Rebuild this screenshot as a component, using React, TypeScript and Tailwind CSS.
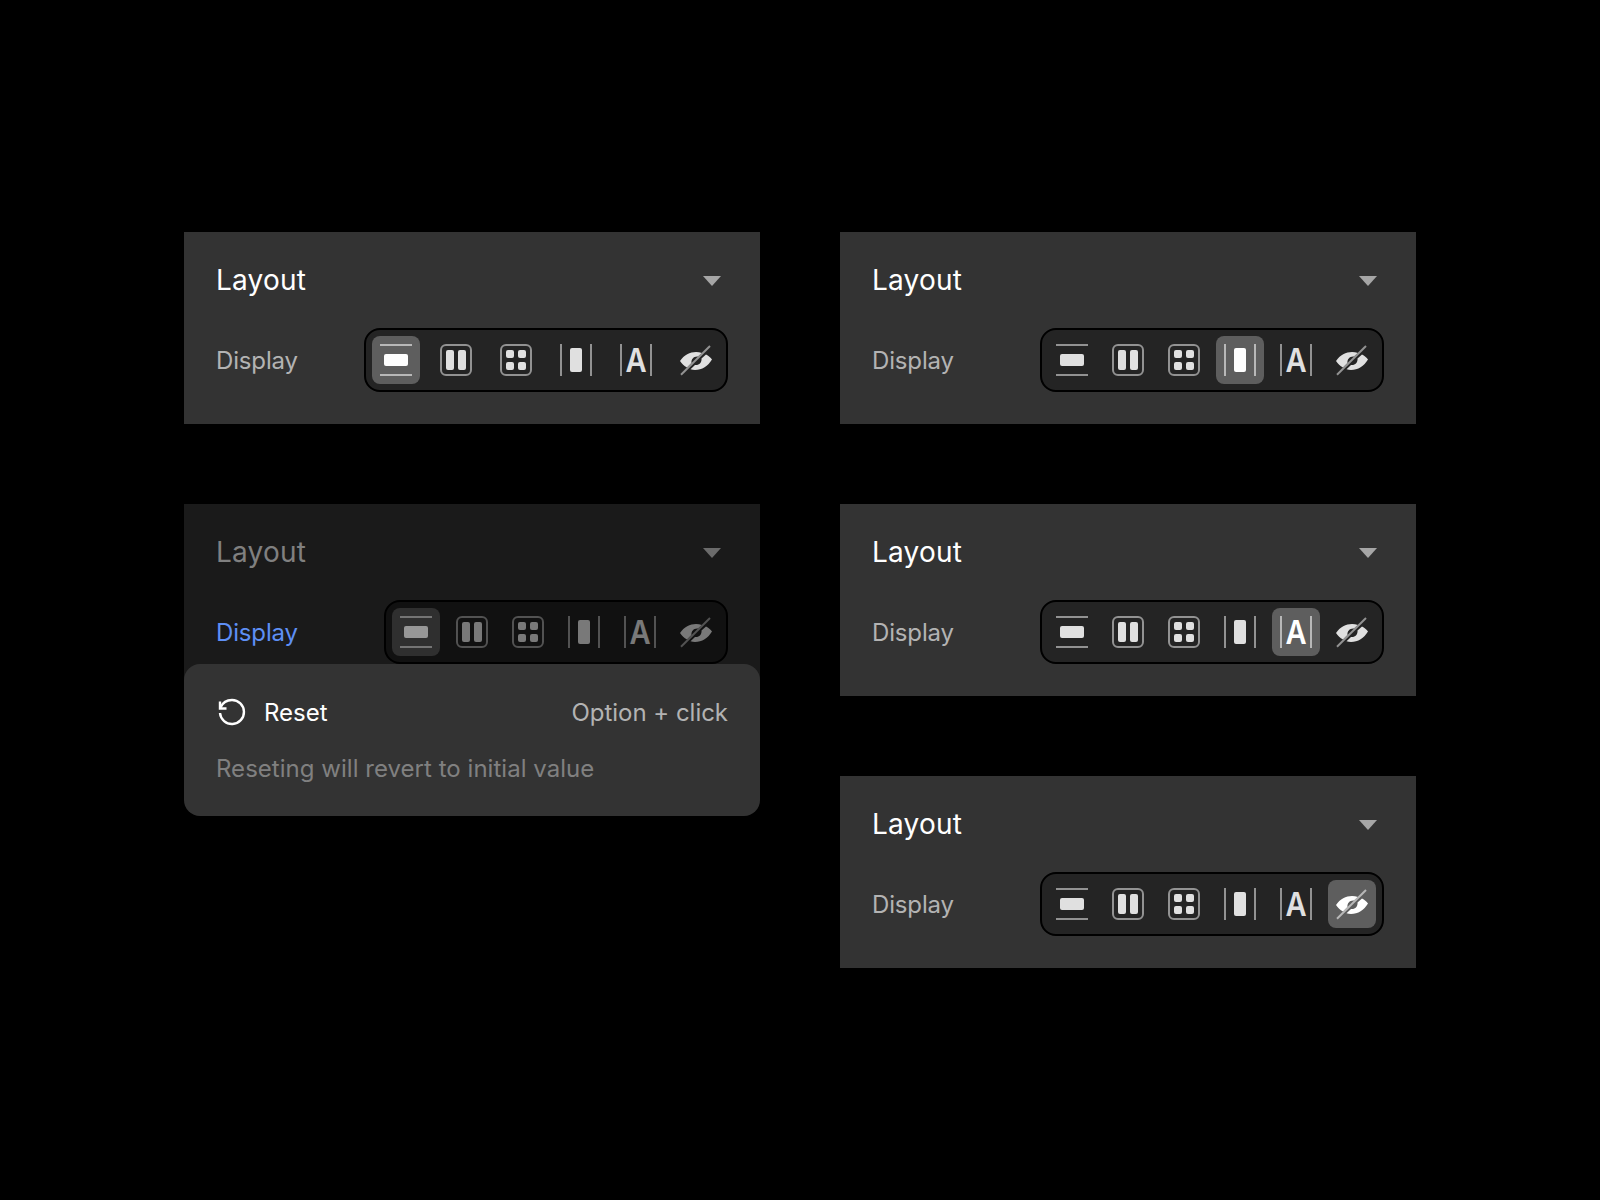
import React from "react";

type IconProps = { on: boolean };

const fill = (on: boolean) => (on ? "#ffffff" : "#e0e0e0");
const line = (on: boolean) => (on ? "#b8b8b8" : "#929292");

const Block = ({ on }: IconProps) => (
    <svg width="32" height="32" viewBox="0 0 32 32" fill="none">
        <rect x="0" y="0" width="32" height="2" fill={line(on)} />
        <rect x="4" y="10" width="24" height="12" rx="2" fill={fill(on)} />
        <rect x="0" y="30" width="32" height="2" fill={line(on)} />
    </svg>
);

const Flex = ({ on }: IconProps) => (
    <svg width="32" height="32" viewBox="0 0 32 32" fill="none">
        <rect x="1" y="1" width="30" height="30" rx="5" stroke={line(on)} strokeWidth="2" />
        <rect x="6" y="6" width="8" height="20" rx="2" fill={fill(on)} />
        <rect x="18" y="6" width="8" height="20" rx="2" fill={fill(on)} />
    </svg>
);

const Grid = ({ on }: IconProps) => (
    <svg width="32" height="32" viewBox="0 0 32 32" fill="none">
        <rect x="1" y="1" width="30" height="30" rx="5" stroke={line(on)} strokeWidth="2" />
        <rect x="6" y="6" width="8" height="8" rx="2" fill={fill(on)} />
        <rect x="18" y="6" width="8" height="8" rx="2" fill={fill(on)} />
        <rect x="6" y="18" width="8" height="8" rx="2" fill={fill(on)} />
        <rect x="18" y="18" width="8" height="8" rx="2" fill={fill(on)} />
    </svg>
);

const Inline = ({ on }: IconProps) => (
    <svg width="32" height="32" viewBox="0 0 32 32" fill="none">
        <rect x="0" y="0" width="2" height="32" fill={line(on)} />
        <rect x="10" y="4" width="12" height="24" rx="2" fill={fill(on)} />
        <rect x="30" y="0" width="2" height="32" fill={line(on)} />
    </svg>
);

const InlineText = ({ on }: IconProps) => (
    <svg width="32" height="32" viewBox="0 0 32 32" fill="none" overflow="visible">
        <rect x="0" y="0" width="2" height="32" fill={line(on)} />
        <text
            transform="translate(16 28) scale(0.88 1)"
            textAnchor="middle"
            fontFamily="Inter, sans-serif"
            fontSize="33"
            fontWeight="600"
            fill={fill(on)}
        >
            A
        </text>
        <rect x="30" y="0" width="2" height="32" fill={line(on)} />
    </svg>
);

const Hidden = ({ on }: IconProps) => (
    <svg width="32" height="32" viewBox="0 0 32 32" fill="none">
        <path
            d="M0 17C4 11 10 8 16 8C18 8 20 8.300 22 9L18 12.500C14 12 11 15 11.500 19L7 23.500C4 22 2 20 0 17Z"
            fill={fill(on)}
        />
        <path
            d="M26 10.500C28.500 11.800 30.500 13.500 32 15.500C28 22 22 26 15 26C13.500 26 12 25.800 10.500 25.300L15 21C19 21.500 22 18.500 21.500 14.500Z"
            fill={fill(on)}
        />
        <path d="M1 30.700 30 2" stroke={line(on)} strokeWidth="2" />
    </svg>
);

const Caret = ({ className }: { className?: string }) => (
    <svg className={className} width="18" height="10" viewBox="0 0 18 10">
        <path d="M0 0h18L9 10 0 0Z" fill="currentColor" />
    </svg>
);

const ResetIcon = () => (
    <svg width="32" height="32" viewBox="0 0 32 32" fill="none" stroke="#fff" strokeWidth="2.400">
        <path d="M4.500 11.500C6.500 7 11 4 16 4A12 12 0 1 1 4 17" />
        <path d="M4 5.500V12.500H10.500" />
    </svg>
);

const icons = [Block, Flex, Grid, Inline, InlineText, Hidden];

function Segmented({ active, gap, dim = false }: { active: number; gap: string; dim?: boolean }) {
    return (
        <div
            className={`flex items-center p-1.5 h-16 border-2 border-black rounded-2xl ${gap} ${dim ? "bg-[#111111]" : "bg-[#242424]"}`}
        >
            {icons.map((Icon, i) => (
                <div
                    key={i}
                    className={`flex items-center justify-center w-12 h-12 rounded-lg ${i === active ? (dim ? "bg-[#2f2f2f]" : "bg-[#5e5e5e]") : ""}`}
                >
                    <div className={dim ? "opacity-50" : ""}>
                        <Icon on={i === active} />
                    </div>
                </div>
            ))}
        </div>
    );
}

function Panel({ active, gap = "gap-2" }: { active: number; gap?: string }) {
    return (
        <div className="w-[576px] h-48 px-8 pt-6 bg-[#333333]">
            <div className="flex items-center justify-between h-12">
                <span className="text-[28px] tracking-[0.2px] text-white">Layout</span>
                <Caret className="mr-[7px] mt-0.5 text-[#a6a6a6]" />
            </div>
            <div className="flex items-center justify-between mt-6">
                <span className="mt-0.5 text-2xl tracking-[-0.15px] text-[#b3b3b3]">Display</span>
                <Segmented active={active} gap={gap} />
            </div>
        </div>
    );
}

function DisabledPanel() {
    return (
        <div className="relative w-[576px] h-48 px-8 pt-6 bg-[#1a1a1a]">
            <div className="flex items-center justify-between h-12">
                <span className="text-[28px] tracking-[0.2px] text-[#808080]">Layout</span>
                <Caret className="mr-[7px] mt-0.5 text-[#6b6b6b]" />
            </div>
            <div className="flex items-center justify-between mt-6">
                <span className="mt-0.5 text-2xl tracking-[-0.15px] text-[#5e8ff5]">Display</span>
                <Segmented active={0} gap="gap-2" dim />
            </div>
            <div className="absolute left-0 top-40 w-[576px] h-[152px] px-8 pt-6 bg-[#333333] rounded-2xl">
                <div className="flex items-center justify-between h-12">
                    <div className="flex items-center gap-4">
                        <ResetIcon />
                        <span className="mt-0.5 text-2xl text-white">Reset</span>
                    </div>
                    <span className="mt-0.5 text-2xl tracking-[-0.03px] text-[#b3b3b3]">Option + click</span>
                </div>
                <div className="mt-[17px] text-2xl tracking-[0.03px] text-[#808080]">Reseting will revert to initial value</div>
            </div>
        </div>
    );
}

export default function App() {
    return (
        <div className="w-[1600px] h-[1200px] bg-black font-['Inter',sans-serif] pt-[232px] pl-[184px]">
            <div className="flex gap-20">
                <div className="flex flex-col gap-20">
                    <Panel active={0} gap="gap-3" />
                    <DisabledPanel />
                </div>
                <div className="flex flex-col gap-20">
                    <Panel active={3} />
                    <Panel active={4} />
                    <Panel active={5} />
                </div>
            </div>
        </div>
    );
}
